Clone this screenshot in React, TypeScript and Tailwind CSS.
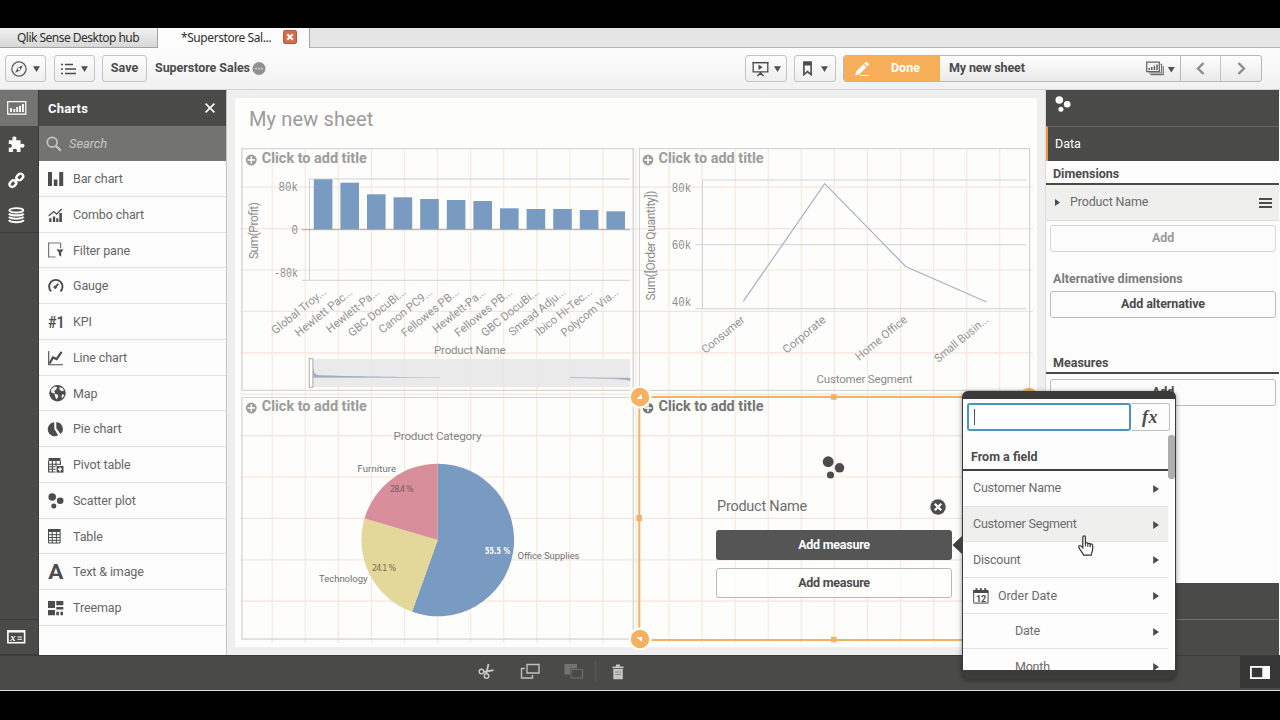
import React from "react";

const SANS = "font-['Roboto','Liberation_Sans',sans-serif]";

function Caret({ className = "" }: { className?: string }) {
  return (
    <svg width="7" height="6" viewBox="0 0 7 6" className={className}>
      <path d="M0 0.3h7L3.5 6z" fill="#505150" />
    </svg>
  );
}

function RightArrow() {
  return (
    <svg width="6" height="8" viewBox="0 0 6 8">
      <path d="M0.2 0v8L6 4z" fill="#4a4b4a" />
    </svg>
  );
}

function Dots({ fill, size }: { fill: string; size: number }) {
  return (
    <svg width={size} height={size} viewBox="0 0 16 16">
      <circle cx="4.3" cy="4" r="3.8" fill={fill} />
      <circle cx="12.2" cy="8.2" r="3.3" fill={fill} />
      <circle cx="5.9" cy="13.2" r="2.5" fill={fill} />
    </svg>
  );
}

const G = "#4b4c4d";
const icons: Record<string, React.ReactNode> = {
  bar: (
    <g fill={G}>
      <path d="M0 1h4v14H0zM5.8 8.6h3.6V15H5.8zM11.2 1h4v14h-4z" />
    </g>
  ),
  combo: (
    <g fill={G}>
      <path d="M1.2 11.2h2.3V15H1.2zM4.9 9.6h2.3V15H4.9zM8.2 11.2h2.2V15H8.2zM11.3 6h2.6v9h-2.6z" />
      <path d="M0.8 8.8L5.8 4.6l2.8 2.6L13.6 2" fill="none" stroke={G} strokeWidth="1.3" />
    </g>
  ),
  filter: (
    <g>
      <path d="M12.6 6V1H0.6v14h7" fill="none" stroke="#777877" strokeWidth="1.2" />
      <path d="M8.4 7.4h7.2l-2.4 3v4.4l-2.3-1.8v-2.6z" fill={G} />
    </g>
  ),
  gauge: (
    <g fill="none" stroke={G}>
      <path d="M3.2 13.4A6.7 6.7 0 1 1 12.4 13.4" strokeWidth="1.9" />
      <path d="M7 9.4L10.4 5.8" strokeWidth="1.8" />
      <circle cx="7.2" cy="9.2" r="1.2" fill={G} />
    </g>
  ),
  line: (
    <g fill="none" stroke={G}>
      <path d="M0.7 1v13.8H15" strokeWidth="1.1" />
      <path d="M1.5 13.5L5 7.5l3.6 1.6L13.6 1.8" strokeWidth="2.2" />
    </g>
  ),
  map: (
    <g>
      <circle cx="9.5" cy="8.2" r="8.2" fill={G} />
      <path d="M3.2 4.2l3.4-2.6 2.6.7-1 2.2-2 1.6 1 1.4-1.5 1-2.7-1.3zM11.2 2.2l3.3.8 1.6 2.6-2.4.6-2-1.4zM6.4 8.6l3 .8 1 1.8-1.8 3.2-1.3-2.2zM14.6 9l1.8 1.2-2.4 3.4-.6-2.4z" fill="#f4f4f3" />
    </g>
  ),
  pie: (
    <g fill={G}>
      <path d="M6.3 1.2v6.9l3.8 6.2A7 7 0 1 1 6.3 1.2z" />
      <path d="M8.3 1a7 7 0 0 1 4.3 12.1L8.3 7.3z" />
    </g>
  ),
  pivot: (
    <g>
      <path d="M0.5 1h12v3h-12z" fill={G} />
      <path d="M0.6 4v11h7M0.6 7.3h11.8M0.6 9.8h7M0.6 12.3h7M4.4 4v11M8 4v5M12.4 4v4" fill="none" stroke={G} strokeWidth="1.1" />
      <path d="M8.6 9h6.9v6.6H8.6z" fill={G} />
      <path d="M12 10.2v4.2M9.9 12.3h4.2" stroke="#fff" strokeWidth="1.5" />
    </g>
  ),
  scatter: (
    <g fill={G}>
      <circle cx="4.2" cy="4" r="3.8" />
      <circle cx="12.2" cy="7.8" r="3.3" />
      <circle cx="5.8" cy="13" r="2.5" />
    </g>
  ),
  table: (
    <g>
      <path d="M0 1h12.6v3H0z" fill={G} />
      <path d="M0.5 4v11h11.6V4M0.5 6.7h11.6M0.5 9.5h11.6M0.5 12.3h11.6M4.2 4v11M8.4 4v11" fill="none" stroke={G} strokeWidth="1" />
    </g>
  ),
  text: (
    <text x="0.2" y="15.2" fontSize="20.5" fontWeight="700" fill={G} textLength="15" lengthAdjust="spacingAndGlyphs">A</text>
  ),
  kpi: (
    <text x="0" y="14" fontSize="17" fontWeight="600" fill={G} textLength="16.5" lengthAdjust="spacingAndGlyphs">#1</text>
  ),
  tree: (
    <path d="M0 1h7v7H0zM8.3 1h7v4.2h-7zM8.3 7h7v2.4h-7zM0 10h7v5.2H0zM8.3 11.7h2.6v3.5H8.3zM12.4 11.7h2.6v3.5h-2.6z" fill={G} />
  ),
};

const chartList: [string, string][] = [
  ["bar", "Bar chart"],
  ["combo", "Combo chart"],
  ["filter", "Filter pane"],
  ["gauge", "Gauge"],
  ["kpi", "KPI"],
  ["line", "Line chart"],
  ["map", "Map"],
  ["pie", "Pie chart"],
  ["pivot", "Pivot table"],
  ["scatter", "Scatter plot"],
  ["table", "Table"],
  ["text", "Text & image"],
  ["tree", "Treemap"],
];

const button =
  "flex items-center justify-center rounded-[3px] border border-[#c3c4c3] bg-linear-to-b from-[#fdfdfd] to-[#eeefee]";

function Tabs() {
  return (
    <div className="flex h-[20px] shrink-0 bg-[#e4e5e4] font-['Noto_Sans','Liberation_Sans',sans-serif] text-[12px] text-[#2f2f2f]">
      <div className="flex w-[158px] items-center border-r border-b border-[#a2a3a2] bg-linear-to-b from-[#f0f1f0] to-[#d6d7d6] pl-[17px] whitespace-nowrap">
        <span className="tracking-[-0.52px]">Qlik Sense Desktop hub</span>
      </div>
      <div className="flex w-[152px] items-center border-r border-[#a2a3a2] bg-[#fbfcfb] pl-[23px] whitespace-nowrap">
        <span className="w-[102px] tracking-[-0.42px]">*Superstore Sal...</span>
        <svg width="14" height="14" viewBox="0 0 14 14" className="mb-[2px]">
          <rect x="0.5" y="0.5" width="13" height="13" rx="1.5" fill="#d9694a" stroke="#b9573c" />
          <path d="M4.2 4.2l5.6 5.6M9.8 4.2L4.2 9.8" stroke="#fff" strokeWidth="2.2" />
        </svg>
      </div>
      <div className="flex-1 border-b border-[#b4b5b4]" />
    </div>
  );
}

function Toolbar() {
  return (
    <div className="flex h-[42px] shrink-0 items-center border-b border-[#d2d3d2] bg-linear-to-b from-[#fcfdfc] to-[#f0f1f0] pl-[5px] text-[12.5px] font-bold text-[#4b4c4b]">
      <div className={`${button} h-[27px] w-[41px] gap-[6px]`}>
        <svg width="16" height="16" viewBox="0 0 16 16" fill="none">
          <circle cx="8" cy="8" r="7.1" stroke="#5c5d5c" strokeWidth="1.3" />
          <path d="M11.8 4.2L9.3 9.3 4.2 11.8 6.7 6.7z" fill="#4f504f" />
          <circle cx="8" cy="8" r="1.2" fill="#fff" />
        </svg>
        <Caret />
      </div>
      <div className={`${button} ml-2 h-[27px] w-[41px] gap-[5px]`}>
        <svg width="15" height="12" viewBox="0 0 15 12" stroke="#4b4c4b" strokeWidth="1.6">
          <path d="M0 1.5h2M0 6h2M0 10.5h2M4 1.5h8M4 6h11M4 10.5h11" />
        </svg>
        <Caret />
      </div>
      <div className={`${button} ml-[7px] h-[27px] w-[45px]`}>Save</div>
      <span className="ml-2 w-[97px] tracking-[-0.05px] whitespace-nowrap">Superstore Sales</span>
      <svg width="14" height="14" viewBox="0 0 14 14">
        <circle cx="7" cy="6.5" r="6.5" fill="#8f9090" />
        <path d="M3 6.6h2M6 6.6h2M9 6.6h2" stroke="#c9c9c9" strokeWidth="1.6" />
      </svg>
      <div className="flex-1" />
      <div className={`${button} h-[27px] w-[42px] gap-[5px]`}>
        <svg width="17" height="16" viewBox="0 0 17 16" fill="none">
          <path d="M1.2 1.6h14.6v9.2H1.2z" stroke="#4b4c4b" strokeWidth="1.3" />
          <path d="M0.5 1.6h16" stroke="#4b4c4b" strokeWidth="1.3" />
          <path d="M6.5 3.5v5.4l4-2.7z" fill="#4b4c4b" />
          <path d="M8.5 11v2M5.4 15l3.1-3 3.1 3" stroke="#4b4c4b" strokeWidth="1.5" />
        </svg>
        <Caret />
      </div>
      <div className={`${button} ml-[7px] h-[27px] w-[42px] gap-[9px]`}>
        <svg width="9" height="15" viewBox="0 0 9 15" fill="none">
          <path d="M0.9 1.2h7.2v12.4L4.5 10.6 0.9 13.6z" stroke="#4b4c4b" strokeWidth="1.6" />
          <path d="M0.5 0.5h8v4h-8z" fill="#4b4c4b" />
        </svg>
        <Caret />
      </div>
      <div className="mr-[18px] ml-[7px] flex h-[27px] w-[419px] rounded-[3px] border border-[#b7b8b7] bg-linear-to-b from-[#fdfdfd] to-[#e9eae9]">
        <div className="flex w-[96px] items-center rounded-l-[2px] bg-[#f7ae59] pl-[10px] text-white">
          <svg width="17" height="16" viewBox="0 0 17 16" fill="#fff">
            <path d="M2.2 10.4L9.3 3.3l3 3-7.1 7.1-4 1zM10.2 2.4L12.3.4l2.9 2.9-2 2z" />
            <path d="M6.5 13.9h9v1h-10z" />
          </svg>
          <span className="ml-[20px]">Done</span>
        </div>
        <div className="flex w-[241px] items-center border-r border-[#b7b8b7] pr-[5px] pl-[9px]">
          <span className="flex-1 tracking-[-0.15px]">My new sheet</span>
          <svg width="29" height="16" viewBox="0 0 29 16" fill="none">
            <path d="M0.700 1.200h12.600v9.500H0.700z" stroke="#5f605f" strokeWidth="1.200" />
            <path d="M3.200 7v2M5.800 6v3M8.400 4.800V9M11 3.600V9" stroke="#5f605f" strokeWidth="1.500" />
            <path d="M14.500 3.200h1v8.800H3M4.500 13.600H17.300V5" stroke="#6f706f" strokeWidth="1.100" />
            <path d="M21.800 6h7l-3.500 5.500z" fill="#505150" />
          </svg>
        </div>
        <div className="flex w-[40px] items-center justify-center border-r border-[#c3c4c3]">
          <svg width="9" height="13" viewBox="0 0 9 13" fill="none" stroke="#8b8c8b" strokeWidth="2.4">
            <path d="M7.500 1L2 6.500 7.500 12" />
          </svg>
        </div>
        <div className="flex flex-1 items-center justify-center">
          <svg width="9" height="13" viewBox="0 0 9 13" fill="none" stroke="#8b8c8b" strokeWidth="2.4">
            <path d="M1.500 1L7 6.500 1.500 12" />
          </svg>
        </div>
      </div>
    </div>
  );
}

function Rail() {
  return (
    <div className="flex w-[38px] shrink-0 flex-col bg-[#4a4b49]">
      <div className="flex h-[36px] items-center bg-[#737472] pl-[7px]">
        <svg width="20" height="14" viewBox="0 0 20 14" fill="none" stroke="#fff">
          <path d="M0.7 0.7h18.1v12.5H0.7z" strokeWidth="1.2" />
          <path d="M4 7v4M7.3 8v3M10.2 6v5M13 4.8V11M15.9 3V11" strokeWidth="1.9" />
        </svg>
      </div>
      <div className="flex h-[36px] items-center pl-[8px]">
        <svg width="17" height="17" viewBox="0 0 17 17" fill="#fff">
          <path d="M0.8 4.3h4.1C3.6 2 4.6 0.5 6.4 0.5S9.2 2 8 4.3h4.5v4c2-1 4-.4 4 1.5s-2 2.500-4 1.500V16H8.600c.9-2 .1-3.200-1.700-3.200S4.300 14 5.200 16H0.800v-4.600c2 .8 3-.1 3-1.600S2.800 7.600.8 8.300z" />
        </svg>
      </div>
      <div className="flex h-[36px] items-center pl-[8px]">
        <svg width="17" height="17" viewBox="0 0 17 17" fill="none" stroke="#fff" strokeWidth="2.4">
          <rect x="-3.6" y="-2.7" width="7.2" height="5.4" rx="2.7" transform="translate(4.9 11.6) rotate(-45)" />
          <rect x="-3.6" y="-2.7" width="7.2" height="5.400" rx="2.7" transform="translate(11.800 5) rotate(-45)" />
          <path d="M6.300 10.500l4-4" strokeWidth="1.800" />
        </svg>
      </div>
      <div className="flex h-[35px] items-center border-b border-[#3b3c3b] pl-[8px]">
        <svg width="17" height="17" viewBox="0 0 17 17" fill="none" stroke="#fff">
          <ellipse cx="8.300" cy="3.300" rx="7" ry="2.200" strokeWidth="1.800" />
          <path d="M1 6.600c1.500 2.400 13.100 2.400 14.600 0M1 9.800c1.500 2.600 13.100 2.600 14.600 0M1 13c1.500 2.900 13.100 2.900 14.600 0" strokeWidth="2.100" />
        </svg>
      </div>
      <div className="flex-1" />
      <div className="flex h-[36px] items-center border-t border-b border-[#3b3c3b] pl-[7px]">
        <svg width="19" height="14" viewBox="0 0 19 14">
          <rect x="0.900" y="0.900" width="16.700" height="11.800" fill="#4a4b49" stroke="#fff" strokeWidth="1.600" />
          <path d="M1 1.800h16.500" stroke="#fff" strokeWidth="1.500" />
          <text x="3.200" y="11" fontSize="10.500" fontStyle="italic" fontWeight="700" fill="#fff" fontFamily="Liberation Serif">x</text>
          <path d="M10.500 7h4.500M10.500 9.300h4.500" stroke="#fff" strokeWidth="1.100" />
        </svg>
      </div>
    </div>
  );
}

function ChartsPanel() {
  return (
    <div className="flex w-[189px] shrink-0 flex-col border-r border-l border-r-[#c4c5c4] border-l-[#3a3b3a] bg-[#fbfcfb]">
      <div className="flex h-[36px] shrink-0 items-center justify-between bg-[#4a4b49] pr-[11px] pl-[9px] text-[13px] font-bold text-white">
        <span className="pt-px tracking-[0.2px]">Charts</span>
        <svg width="10" height="10" viewBox="0 0 10 10" stroke="#fff" strokeWidth="1.600">
          <path d="M0.600.600l8.800 8.800M9.400.600L.600 9.400" />
        </svg>
      </div>
      <div className="flex h-[35px] shrink-0 items-center bg-[#737472] pl-[7px] text-[13px] text-[#c6c7c6] italic">
        <svg width="16" height="16" viewBox="0 0 16 16" fill="none" stroke="#c6c7c6">
          <circle cx="6.200" cy="6.200" r="4.900" strokeWidth="1.700" />
          <path d="M9.800 9.800l5.100 5" strokeWidth="2.300" />
        </svg>
        <span className="ml-[7px] pt-px tracking-[-0.1px]">Search</span>
      </div>
      {chartList.map(([id, name]) => (
        <div key={id} className="flex h-[35.75px] shrink-0 items-center border-b border-[#e0e1e0] pt-[2px] pl-[9px] text-[12.5px] tracking-[-0.12px] text-[#666766]">
          <svg width="19" height="17" viewBox="0 0 19 17" className="mr-[6px] overflow-visible">
            {icons[id]}
          </svg>
          {name}
        </div>
      ))}
    </div>
  );
}

const barTops = [179.3, 182.7, 194.3, 197.3, 199, 200, 201, 208.3, 209, 209, 210, 211.3];
const barNames: [string, number][] = [
  ["Global Troy...", 66], ["Hewlett Pac...", 70], ["Hewlett-Pa...", 64], ["GBC DocuBi...", 70],
  ["Canon PC9...", 65], ["Fellowes PB...", 70], ["Hewlett-Pa...", 64], ["Fellowes PB...", 70],
  ["GBC DocuBi...", 70], ["Smead Adju...", 69], ["Ibico Hi-Tec...", 69], ["Polycom Via...", 70],
];

function Title({ x, y, dark }: { x: number; y: number; dark?: boolean }) {
  const c = dark ? "#747574" : "#9b9c9b";
  return (
    <g>
      <circle cx={x} cy={y} r="5.400" fill={c} />
      <path d={`M${x - 3.700} ${y}h7.400M${x} ${y - 3.700}v7.400`} stroke="#fff" strokeWidth="1.400" />
      <text x={x + 10.500} y={y + 3} fontSize="13.800" fontWeight="700" fill={c} textLength="105" lengthAdjust="spacingAndGlyphs">
        Click to add title
      </text>
    </g>
  );
}

function Mono({ x, y, w, children }: { x: number; y: number; w: number; children: string }) {
  return (
    <text x={x - w} y={y} fontSize="12" fill="#8c8d8c" textLength={w} lengthAdjust="spacingAndGlyphs" fontFamily="Liberation Mono, monospace">
      {children}
    </text>
  );
}

function BarCard() {
  return (
    <svg width="393" height="243" viewBox="241 148 393 243" className="block">
      <rect x="242" y="148.500" width="391.300" height="242" fill="none" stroke="#d6d7d6" strokeWidth="1.500" />
      <Title x={251.300} y={160} />
      <path d="M309 179h321M302 280.300h328M309.500 179v101.500" stroke="#cfd1d4" fill="none" />
      {barTops.map((t, i) => (
        <rect key={i} x={313.800 + i * 26.600} y={t} width="18.600" height={229.500 - t} fill="#7a9bc1" />
      ))}
      <path d="M302 229.700h328" stroke="#a8a8a8" />
      <Mono x={298} y={190.700} w={19.500}>80k</Mono>
      <Mono x={298} y={233.700} w={6.500}>0</Mono>
      <Mono x={298} y={277.200} w={24}>-80k</Mono>
      <text transform="translate(258 259) rotate(-90)" fontSize="12" fill="#8b8c8b" textLength="57">Sum(Profit)</text>
      {barNames.map(([n, w], i) => (
        <text key={i} transform={`translate(${326.800 + i * 26.600} 293.300) rotate(-38.800)`} x={-w} fontSize="11.500" fill="#939493" textLength={w} lengthAdjust="spacingAndGlyphs">
          {n}
        </text>
      ))}
      <text x="434" y="354.300" fontSize="11.500" fill="#8b8c8b" textLength="71.500">Product Name</text>
      <rect x="310" y="359" width="320" height="28" fill="#e8e8e8" fillOpacity="0.900" />
      <path d="M313 377.500V366c.8 8 2 9 7 9.300 30 1 60 1.500 120 2.300z" fill="#9aacc4" />
      <path d="M313 377.200L440 377.700M570 377.400q40 .3 60 .6v3q-2-2.600-60-3.200z" stroke="#b3bccb" strokeWidth="0.500" fill="#9aacc4" />
      <rect x="309.300" y="358.700" width="3.600" height="28.600" fill="#fff" stroke="#a9aaa9" />
    </svg>
  );
}

function LineCard() {
  return (
    <svg width="392" height="243" viewBox="639 148 392 243" className="block">
      <rect x="639.300" y="148.500" width="390.300" height="242" fill="none" stroke="#d3d4d5" strokeWidth="1.300" />
      <Title x={648} y={160} />
      <path d="M702.500 180h324M695.500 244.700h331M695.500 308.700h331M702.500 180v129" fill="none" stroke="#d0d2d5" />
      <path d="M743.300 301.300L824.700 183.700 905.700 266.500 986.500 302" fill="none" stroke="#a9b0c2" strokeWidth="1.200" />
      <Mono x={691.300} y={192} w={19.500}>80k</Mono>
      <Mono x={691.300} y={249} w={19.500}>60k</Mono>
      <Mono x={691.300} y={305.700} w={19.500}>40k</Mono>
      <text transform="translate(655 300.500) rotate(-90)" fontSize="12" fill="#8b8c8b" textLength="110">Sum([Order Quantity])</text>
      {([["Consumer", 52], ["Corporate", 52], ["Home Office", 63], ["Small Busin...", 66]] as [string, number][]).map(([n, w], i) => (
        <text key={n} transform={`translate(${745.500 + i * 81.200} 321) rotate(-39.500)`} x={-w} fontSize="11.500" fill="#939493" textLength={w} lengthAdjust="spacingAndGlyphs">
          {n}
        </text>
      ))}
      <text x="816.500" y="382.500" fontSize="11.500" fill="#8b8c8b" textLength="96">Customer Segment</text>
    </svg>
  );
}

function PieCard() {
  return (
    <svg width="393" height="243" viewBox="241 397 393 243" className="block">
      <rect x="242" y="397.300" width="391.300" height="241.800" fill="none" stroke="#d3d4d3" strokeWidth="1.300" />
      <Title x={251.300} y={408} />
      <text x="393.500" y="440.300" fontSize="11.700" fill="#858685" textLength="88">Product Category</text>
      <path d="M437.700 540V463.700A76.300 76.300 0 1 1 412 611.800z" fill="#7a9bc1" />
      <path d="M437.700 540L412 611.800A76.300 76.300 0 0 1 364.500 518.500z" fill="#e3d899" />
      <path d="M437.700 540L364.500 518.500A76.300 76.300 0 0 1 437.700 463.700z" fill="#d98e9c" />
      <g fontSize="9.500" fill="#6f706f">
        <text x="357.500" y="472" textLength="38.500">Furniture</text>
        <text x="319" y="582" textLength="48.500">Technology</text>
        <text x="517.500" y="558.500" textLength="62">Office Supplies</text>
      </g>
      <g fontSize="8" fontFamily="DejaVu Sans, sans-serif">
        <text x="390" y="492" fill="#7a5a60" textLength="23.500">28.4 %</text>
        <text x="372" y="571" fill="#77714f" textLength="24">24.1 %</text>
        <text x="485" y="554" fill="#fff" fontWeight="700" textLength="25" lengthAdjust="spacingAndGlyphs">55.5 %</text>
      </g>
    </svg>
  );
}

function SelectedCard() {
  return (
    <div className="relative h-[243px] w-[392px] pt-[59px] pl-[77px]">
      <svg width="410" height="265" viewBox="629 386 410 265" className="absolute top-[-11px] left-[-10px]">
        <Title x={648} y={408} dark />
        <path d="M639.300 397h390.500v243H639.300z" fill="none" stroke="#f3b165" strokeWidth="2" />
        <path d="M831 394.300h5.500v5.500H831zM831 636.700h5.500v5.500H831zM636.500 515h5.500v6h-5.500z" fill="#f3b165" />
        <circle cx="640" cy="397" r="11.500" fill="#fffdfa" />
        <circle cx="640" cy="397" r="9.200" fill="#f5b15f" />
        <path d="M636.500 399l5.500-5v5z" fill="#fff" />
        <circle cx="1029" cy="397" r="9.200" fill="#f5b15f" />
        <circle cx="640" cy="639" r="11.500" fill="#fffdfa" />
        <circle cx="640" cy="639" r="9.200" fill="#f5b15f" />
        <path d="M636.500 637h5.500v5z" fill="#fff" />
      </svg>
      <div className="flex w-[234px] justify-center">
        <Dots fill="#4b4c4b" size={23} />
      </div>
      <div className="mt-[14px] flex h-[27px] w-[236px] items-center justify-between pr-[6px] pl-px text-[14.500px] tracking-[-0.250px] text-[#6d6e6d]">
        <span className="pt-px">Product Name</span>
        <svg width="16" height="16" viewBox="0 0 16 16">
          <circle cx="8" cy="8" r="7.700" fill="#4b4c4b" />
          <path d="M4.800 4.800l6.400 6.400M11.200 4.800l-6.400 6.400" stroke="#fff" strokeWidth="2.200" />
        </svg>
      </div>
      <div className="mt-[10px] flex h-[30px] w-[236px] items-center justify-center rounded-[3px] bg-[#545554] text-[12.500px] font-bold tracking-[-0.250px] text-white">Add measure</div>
      <div className="mt-[8px] flex h-[30px] w-[236px] items-center justify-center rounded-[3px] border border-[#b9bab9] bg-[#fefefe]/70 text-[12.500px] font-bold tracking-[-0.250px] text-[#4b4c4b]">Add measure</div>
    </div>
  );
}

function GridLines() {
  return (
    <svg width="802" height="549" viewBox="235 98 802 549" className="absolute top-0 left-0">
      {Array.from({ length: 23 }, (_, i) => (
        <path key={i} d={`M${272.200 + i * 33.070} 148V643`} stroke="#f6e9df" strokeWidth="1.200" />
      ))}
      {Array.from({ length: 11 }, (_, i) => (
        <path key={i} d={`M240 ${187.200 + i * 41.400}H1033`} stroke="#f7e4d8" strokeWidth="1.200" />
      ))}
    </svg>
  );
}

function Sheet() {
  return (
    <div className="flex-1 bg-[#eeefee] pt-[8px] pl-[8px]">
      <div className="relative h-[549px] w-[802px] bg-[#fdfdfc]">
        <div className="flex h-[50px] items-center pb-[8px] pl-[14px] text-[20px] text-[#9a9b9a]">
          <span className="tracking-[0.150px]">My new sheet</span>
        </div>
        <GridLines />
        <div className="relative grid grid-cols-[393px_392px] grid-rows-[243px_243px] gap-x-[5px] gap-y-[6px] pl-[6px]">
          <BarCard />
          <LineCard />
          <PieCard />
          <SelectedCard />
        </div>
      </div>
    </div>
  );
}

function PanelButton({ children, muted }: { children: string; muted?: boolean }) {
  return (
    <div
      className={`ml-[4px] flex h-[27px] w-[226px] shrink-0 items-center justify-center rounded-[3px] border font-bold tracking-[-0.100px] ${
        muted ? "border-[#d6d7d6] text-[#9a9b9a]" : "border-[#bcbdbc] text-[#4b4c4b]"
      }`}
    >
      {children}
    </div>
  );
}

function Properties() {
  return (
    <div className="flex w-[234px] shrink-0 flex-col border-l border-[#dadbda] bg-[#fbfcfb] text-[12.500px]">
      <div className="h-[36px] shrink-0 bg-[#4a4b49] pt-[6px] pl-[9px]">
        <Dots fill="#fff" size={16} />
      </div>
      <div className="flex h-[35px] shrink-0 items-center border-t border-l-[2px] border-t-[#646563] border-l-[#f0993b] bg-[#4a4b49] pl-[7px] text-white">Data</div>
      <div className="flex h-[24px] shrink-0 items-center border-b-2 border-[#4a4b49] pt-[4px] pl-[7px] font-bold text-[#4b4c4b]">Dimensions</div>
      <div className="flex h-[36px] shrink-0 items-center border-b border-[#dcdddc] bg-[#efefee] pr-[7px] pl-[9px] text-[#6b6c6b]">
        <svg width="5" height="7" viewBox="0 0 5 7">
          <path d="M0 0v7l5-3.500z" fill="#4b4c4b" />
        </svg>
        <span className="ml-[10px] flex-1 tracking-[-0.150px]">Product Name</span>
        <svg width="13" height="10" viewBox="0 0 13 10" stroke="#4b4c4b" strokeWidth="1.800">
          <path d="M0 1h13M0 5h13M0 9h13" />
        </svg>
      </div>
      <div className="h-[4px]" />
      <PanelButton muted>Add</PanelButton>
      <div className="mt-[18px] mb-[3px] flex h-[18px] items-center pl-[7px] font-bold text-[#7b7c7b]">Alternative dimensions</div>
      <PanelButton>Add alternative</PanelButton>
      <div className="mt-[36px] flex h-[20px] shrink-0 items-center border-b-2 border-[#4a4b49] pt-px pl-[7px] font-bold text-[#4b4c4b]">Measures</div>
      <div className="h-[5px]" />
      <PanelButton>Add</PanelButton>
      <div className="flex-1" />
      <div className="h-[36px] shrink-0 bg-[#4a4b49]" />
      <div className="h-[36px] shrink-0 border-t border-[#6d6e6c] bg-[#4a4b49]" />
    </div>
  );
}

function BottomBar() {
  return (
    <div className="flex h-[35px] shrink-0 items-start border-t border-[#3a3b3a] bg-[#4a4b49]">
      <svg width="150" height="20" viewBox="478 661 150 20" className="mt-[5px] ml-[478px]" fill="none">
        <g stroke="#c9cac9">
          <circle cx="481.500" cy="671.500" r="2.300" strokeWidth="1.400" />
          <circle cx="486.500" cy="676" r="2.300" strokeWidth="1.400" />
          <path d="M484 672l9.500-1.800M486.300 673.500L488.500 664" strokeWidth="1.800" />
        </g>
        <g stroke="#bfc0bf" strokeWidth="1.400">
          <path d="M527 664.500h12v8.500h-12z" />
          <path d="M525 668.500h-3.500v9.500h11v-3" />
        </g>
        <path d="M564.500 664h12.500v4.500h-7v6h-5.500z" fill="#737472" />
        <path d="M571 669.500h11.500V678H571z" stroke="#6c6d6b" strokeWidth="1.200" />
        <path d="M595.500 661v20" stroke="#5a5b59" />
        <path d="M612.500 666.500h11v1.800h-11zM616 664.500h4v2h-4zM613.300 669h9.500v10.300h-9.500z" fill="#c5c6c5" />
        <path d="M615 672h6M615 674.500h6" stroke="#8e8f8d" />
      </svg>
      <div className="flex-1" />
      <div className="flex h-[32px] w-[40px] items-center justify-center bg-[#353635]">
        <svg width="20" height="13" viewBox="0 0 20 13">
          <rect width="20" height="13" fill="#fff" />
          <rect x="1.800" y="1.800" width="10.500" height="9.400" fill="#353635" />
        </svg>
      </div>
    </div>
  );
}

function MenuRow({ children, active }: { children: React.ReactNode; active?: boolean }) {
  return (
    <div
      className={`flex h-[35.700px] shrink-0 items-center justify-between border-b border-[#e0e1e0] pt-px pr-[9px] pl-[10px] tracking-[-0.220px] ${
        active ? "bg-[#efefee]" : ""
      }`}
    >
      {children}
      <RightArrow />
    </div>
  );
}

function FieldMenu() {
  return (
    <div className="absolute top-[391px] left-[962px] h-[288px] w-[214px] rounded-[6px] border-x-[1.500px] border-t-[8px] border-b-[9px] border-[#3b3b39] bg-[#fdfdfd] text-[12.500px] text-[#6b6c6b] shadow-[0_1px_5px_rgba(0,0,0,0.450)]">
      <svg width="11" height="20" viewBox="0 0 11 20" className="absolute top-[136px] left-[-11px]">
        <path d="M11 0v20L0.500 10z" fill="#40413f" />
      </svg>
      <div className="flex h-[271px] flex-col overflow-hidden">
        <div className="flex pt-[4px] pl-[4px]">
          <div className="flex h-[28px] w-[164px] items-center rounded-[3px] border-2 border-[#4b95bd] bg-white pl-[5px]">
            <div className="h-[16px] w-px bg-[#555]" />
          </div>
          <div className="flex h-[28px] w-[39px] items-center justify-center rounded-r-[3px] border border-l-0 border-[#bfc0bf] font-['Liberation_Serif',serif] text-[18px] font-bold tracking-[0.500px] text-[#4b4c4b] italic">fx</div>
        </div>
        <div className="flex flex-1">
          <div className="flex w-[205px] shrink-0 flex-col">
            <div className="flex h-[40px] shrink-0 items-center border-b-2 border-[#3f403f] pt-[14px] pl-[8px] font-bold text-[#4b4c4b]">From a field</div>
            <MenuRow>Customer Name</MenuRow>
            <MenuRow active>Customer Segment</MenuRow>
            <MenuRow>Discount</MenuRow>
            <MenuRow>
              <div className="flex flex-1 items-center gap-[9px]">
                <svg width="16" height="16" viewBox="0 0 16 16">
                  <rect x="0.600" y="2.500" width="14.500" height="12.700" rx="1" fill="#fff" stroke="#6a6b6a" strokeWidth="1.200" />
                  <path d="M0.300 2h15v3h-15zM2.500 0.300h2V3h-2zM6.900.300h2V3h-2zM11.200.300h2V3h-2z" fill="#4b4c4b" />
                  <text x="3" y="13.700" fontSize="8.500" fontWeight="700" fill="#4b4c4b" textLength="10" lengthAdjust="spacingAndGlyphs">12</text>
                </svg>
                <span className="tracking-[-0.050px]">Order Date</span>
              </div>
            </MenuRow>
            <MenuRow><span className="pl-[42px]">Date</span></MenuRow>
            <MenuRow><span className="pl-[42px]">Month</span></MenuRow>
          </div>
          <div className="mt-[4px] h-[44px] w-[7px] rounded-[3px] bg-[#adaead]" />
        </div>
      </div>
      <svg width="18" height="22" viewBox="0 0 18 22" className="absolute top-[136px] left-[114px]">
        <path d="M5.800 2.300c0-1.800 2.600-1.800 2.600 0v6.200c.3-1.200 2.300-1 2.400.5.500-1.200 2.300-.8 2.400.5.600-1 2.500-.5 2.500 1v3.800c0 1.600-1.200 3-1.500 5.900H6.500C6 17.500 2.300 14.500 1.700 12c-.3-1.700 1.700-2 2.700-.6l1.400 1.500z" fill="#fff" stroke="#333" strokeWidth="1.200" />
        <path d="M8.400 8v3.500M10.800 9v3M13.200 9.500v2.800" stroke="#333" />
      </svg>
    </div>
  );
}

export default function App() {
  return (
    <div className={`relative h-[720px] w-[1280px] overflow-hidden bg-black pt-[28px] ${SANS}`}>
      <div className="flex h-[663px] w-full flex-col border-b border-[#dedfe4] bg-white">
        <Tabs />
        <Toolbar />
        <div className="flex h-[565px] shrink-0 pr-px">
          <Rail />
          <ChartsPanel />
          <Sheet />
          <Properties />
        </div>
        <BottomBar />
      </div>
      <FieldMenu />
    </div>
  );
}
